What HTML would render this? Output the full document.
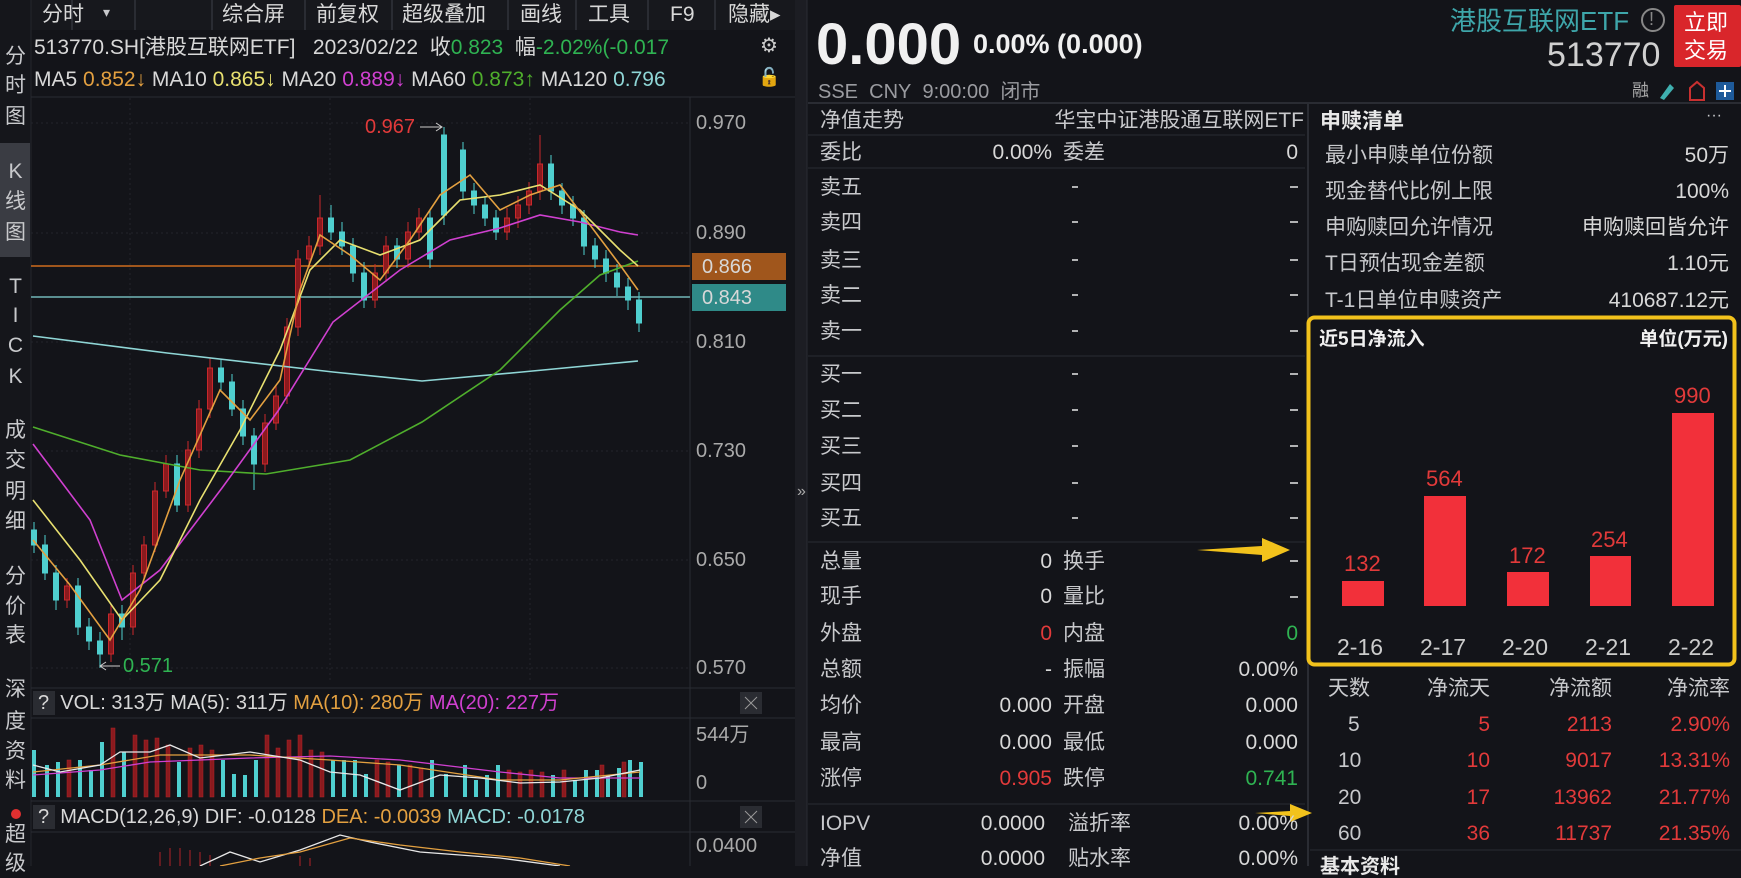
<!DOCTYPE html>
<html><head><meta charset="utf-8">
<style>
*{margin:0;padding:0;box-sizing:border-box}
body{width:1741px;height:866px;background:#131419;overflow:hidden;position:relative;font-family:"Liberation Sans","Noto Sans CJK SC",sans-serif;color:#c8c9cc}
.t{position:absolute;white-space:nowrap;line-height:1}
.r{text-align:right}
.g{color:#2fb352}.rd{color:#e23a3a}.w{color:#d8d8d8}
.s{font-size:21px}
.sb{position:absolute;left:0;width:31px;text-align:center;font-size:21px;color:#c8c9cc;line-height:1}
</style></head><body>
<svg width="1741" height="866" style="position:absolute;left:0;top:0">
<!-- toolbar -->
<rect x="0" y="0" width="800" height="30" fill="#17181d"/>
<g stroke="#2a2c33" stroke-width="2">
<line x1="72" y1="0" x2="72" y2="30"/><line x1="135" y1="0" x2="135" y2="30"/><line x1="212" y1="0" x2="212" y2="30"/>
<line x1="305" y1="0" x2="305" y2="30"/><line x1="392" y1="0" x2="392" y2="30"/><line x1="508" y1="0" x2="508" y2="30"/>
<line x1="576" y1="0" x2="576" y2="30"/><line x1="648" y1="0" x2="648" y2="30"/><line x1="715" y1="0" x2="715" y2="30"/>
</g>
<!-- sidebar -->
<rect x="0" y="0" width="31" height="866" fill="#15161b"/>
<rect x="0" y="143" width="30" height="114" fill="#3a3c43"/>
<line x1="31" y1="0" x2="31" y2="866" stroke="#24262c"/>
<circle cx="16" cy="814" r="5" fill="#e03030"/>
<!-- chart grid -->
<g stroke="#23252c" stroke-dasharray="2,3">
<line x1="31" y1="123" x2="690" y2="123"/><line x1="31" y1="233" x2="690" y2="233"/>
<line x1="31" y1="342" x2="690" y2="342"/><line x1="31" y1="451" x2="690" y2="451"/>
<line x1="31" y1="560" x2="690" y2="560"/><line x1="31" y1="668" x2="690" y2="668"/>
<line x1="130" y1="98" x2="130" y2="680"/><line x1="330" y1="98" x2="330" y2="680"/><line x1="530" y1="98" x2="530" y2="680"/>
</g>
<line x1="31" y1="97" x2="795" y2="97" stroke="#2a2c33"/>
<line x1="690" y1="97" x2="690" y2="866" stroke="#2a2c33"/>
<line x1="31" y1="266" x2="690" y2="266" stroke="#a0561c" stroke-width="2"/>
<line x1="31" y1="297" x2="690" y2="297" stroke="#5a8e90" stroke-width="2"/>
<rect x="692" y="253" width="94" height="27" fill="#a0561c"/>
<rect x="692" y="284" width="94" height="27" fill="#2f8a88"/>
<!-- candles -->
<g id="c">
<g stroke="#4fcfcf" fill="#4fcfcf">
<line x1="34" y1="522" x2="34" y2="553"/><rect x="31.5" y="530" width="5" height="15"/>
<line x1="45" y1="535" x2="45" y2="580"/><rect x="42.5" y="545" width="5" height="28"/>
<line x1="56" y1="565" x2="56" y2="610"/><rect x="53.5" y="573" width="5" height="27"/>
<line x1="78" y1="578" x2="78" y2="635"/><rect x="75.5" y="586" width="5" height="41"/>
<line x1="89" y1="618" x2="89" y2="650"/><rect x="86.5" y="627" width="5" height="14"/>
<line x1="100" y1="632" x2="100" y2="668"/><rect x="97.5" y="641" width="5" height="13"/>
<line x1="122" y1="605" x2="122" y2="640"/><rect x="119.5" y="614" width="5" height="13"/>
<line x1="177" y1="455" x2="177" y2="512"/><rect x="174.5" y="464" width="5" height="41"/>
<line x1="221" y1="360" x2="221" y2="390"/><rect x="218.5" y="368" width="5" height="14"/>
<line x1="232" y1="374" x2="232" y2="416"/><rect x="229.5" y="382" width="5" height="27"/>
<line x1="243" y1="400" x2="243" y2="445"/><rect x="240.5" y="409" width="5" height="27"/>
<line x1="254" y1="428" x2="254" y2="490"/><rect x="251.5" y="436" width="5" height="28"/>
<line x1="331" y1="205" x2="331" y2="240"/><rect x="328.5" y="218" width="5" height="14"/>
<line x1="342" y1="222" x2="342" y2="255"/><rect x="339.5" y="232" width="5" height="14"/>
<line x1="353" y1="238" x2="353" y2="282"/><rect x="350.5" y="246" width="5" height="27"/>
<line x1="364" y1="262" x2="364" y2="308"/><rect x="361.5" y="273" width="5" height="27"/>
<line x1="397" y1="238" x2="397" y2="268"/><rect x="394.5" y="246" width="5" height="13"/>
<line x1="430" y1="210" x2="430" y2="268"/><rect x="427.5" y="218" width="5" height="41"/>
<line x1="444" y1="127" x2="444" y2="225"/><rect x="441.5" y="135" width="5" height="80"/>
<line x1="463" y1="142" x2="463" y2="200"/><rect x="460.5" y="150" width="5" height="41"/>
<line x1="474" y1="183" x2="474" y2="214"/><rect x="471.5" y="191" width="5" height="14"/>
<line x1="485" y1="196" x2="485" y2="226"/><rect x="482.5" y="205" width="5" height="13"/>
<line x1="496" y1="210" x2="496" y2="240"/><rect x="493.5" y="218" width="5" height="14"/>
<line x1="551" y1="155" x2="551" y2="200"/><rect x="548.5" y="164" width="5" height="27"/>
<line x1="562" y1="183" x2="562" y2="214"/><rect x="559.5" y="191" width="5" height="14"/>
<line x1="573" y1="196" x2="573" y2="226"/><rect x="570.5" y="205" width="5" height="13"/>
<line x1="584" y1="210" x2="584" y2="255"/><rect x="581.5" y="218" width="5" height="28"/>
<line x1="595" y1="238" x2="595" y2="268"/><rect x="592.5" y="246" width="5" height="13"/>
<line x1="606" y1="250" x2="606" y2="282"/><rect x="603.5" y="259" width="5" height="14"/>
<line x1="617" y1="264" x2="617" y2="296"/><rect x="614.5" y="273" width="5" height="14"/>
<line x1="628" y1="278" x2="628" y2="310"/><rect x="625.5" y="287" width="5" height="13"/>
<line x1="639" y1="292" x2="639" y2="332"/><rect x="636.5" y="300" width="5" height="23"/>
</g>
<g stroke="#c8282c" fill="#8a1a1e">
<line x1="67" y1="578" x2="67" y2="608"/><rect x="64.5" y="586" width="5" height="14"/>
<line x1="111" y1="605" x2="111" y2="662"/><rect x="108.5" y="614" width="5" height="40"/>
<line x1="133" y1="565" x2="133" y2="635"/><rect x="130.5" y="573" width="5" height="54"/>
<line x1="144" y1="536" x2="144" y2="582"/><rect x="141.5" y="545" width="5" height="28"/>
<line x1="155" y1="482" x2="155" y2="552"/><rect x="152.5" y="491" width="5" height="54"/>
<line x1="166" y1="455" x2="166" y2="498"/><rect x="163.5" y="464" width="5" height="27"/>
<line x1="188" y1="441" x2="188" y2="512"/><rect x="185.5" y="450" width="5" height="55"/>
<line x1="199" y1="400" x2="199" y2="458"/><rect x="196.5" y="409" width="5" height="41"/>
<line x1="210" y1="358" x2="210" y2="418"/><rect x="207.5" y="368" width="5" height="41"/>
<line x1="265" y1="414" x2="265" y2="472"/><rect x="262.5" y="423" width="5" height="41"/>
<line x1="276" y1="386" x2="276" y2="430"/><rect x="273.5" y="396" width="5" height="27"/>
<line x1="287" y1="318" x2="287" y2="404"/><rect x="284.5" y="327" width="5" height="69"/>
<line x1="298" y1="250" x2="298" y2="336"/><rect x="295.5" y="259" width="5" height="68"/>
<line x1="309" y1="236" x2="309" y2="268"/><rect x="306.5" y="246" width="5" height="13"/>
<line x1="320" y1="195" x2="320" y2="255"/><rect x="317.5" y="218" width="5" height="28"/>
<line x1="375" y1="264" x2="375" y2="308"/><rect x="372.5" y="273" width="5" height="27"/>
<line x1="386" y1="236" x2="386" y2="282"/><rect x="383.5" y="246" width="5" height="27"/>
<line x1="408" y1="222" x2="408" y2="268"/><rect x="405.5" y="232" width="5" height="27"/>
<line x1="419" y1="208" x2="419" y2="240"/><rect x="416.5" y="218" width="5" height="14"/>
<line x1="507" y1="208" x2="507" y2="240"/><rect x="504.5" y="218" width="5" height="14"/>
<line x1="518" y1="196" x2="518" y2="228"/><rect x="515.5" y="205" width="5" height="13"/>
<line x1="529" y1="182" x2="529" y2="214"/><rect x="526.5" y="191" width="5" height="14"/>
<line x1="540" y1="135" x2="540" y2="200"/><rect x="537.5" y="164" width="5" height="27"/>
</g>
</g>
<!-- MAs -->
<g fill="none" stroke-width="1.6">
<polyline stroke="#8fd6d6" points="33,336 167,353 333,372 422,381 522,372 638,361"/>
<polyline stroke="#4fae2c" points="33,427 120,455 200,470 266,474 350,460 422,422 500,370 560,310 600,275 638,261"/>
<polyline stroke="#d040d0" points="33,444 90,520 122,600 160,570 222,488 278,411 333,322 400,270 450,240 500,228 540,215 580,222 620,232 638,235"/>
<polyline stroke="#e8e070" points="33,500 80,560 122,620 160,580 200,500 240,430 280,350 310,270 340,240 380,255 420,240 460,200 500,195 540,185 580,210 620,250 638,266"/>
<polyline stroke="#e3a040" points="33,540 70,585 110,640 140,590 180,480 220,390 250,420 280,380 300,290 320,235 350,255 380,280 410,240 440,195 470,175 500,210 530,195 560,185 590,225 620,265 638,290"/>
</g>
<path d="M420 127 H442 M436 123 L442 127 L436 131" stroke="#ccc" fill="none"/>
<path d="M100 666 H120 M106 662 L100 666 L106 670" stroke="#ccc" fill="none"/>
<!-- vol panel -->
<line x1="31" y1="688" x2="795" y2="688" stroke="#2a2c33"/>
<rect x="33" y="691" width="22" height="24" fill="#2a2c32"/>
<rect x="740" y="692" width="22" height="22" fill="#2a2c32"/>
<path d="M745 697 L757 709 M757 697 L745 709" stroke="#999"/>
<line x1="31" y1="718" x2="795" y2="718" stroke="#2a2c33"/>
<g id="vol">
<g fill="#4fcfcf">
<rect x="32" y="750" width="4" height="47"/><rect x="45" y="765" width="4" height="32"/><rect x="56" y="762" width="4" height="35"/><rect x="78" y="760" width="4" height="37"/><rect x="89" y="770" width="4" height="27"/><rect x="100" y="742" width="4" height="55"/><rect x="122" y="752" width="4" height="45"/><rect x="177" y="762" width="4" height="35"/><rect x="221" y="760" width="4" height="37"/><rect x="232" y="774" width="4" height="23"/><rect x="243" y="775" width="4" height="22"/><rect x="254" y="760" width="4" height="37"/><rect x="331" y="760" width="4" height="37"/><rect x="342" y="760" width="4" height="37"/><rect x="353" y="760" width="4" height="37"/><rect x="364" y="774" width="4" height="23"/><rect x="397" y="765" width="4" height="32"/><rect x="430" y="760" width="4" height="37"/><rect x="444" y="774" width="4" height="23"/><rect x="463" y="765" width="4" height="32"/><rect x="474" y="780" width="4" height="17"/><rect x="485" y="775" width="4" height="22"/><rect x="496" y="765" width="4" height="32"/><rect x="551" y="775" width="4" height="22"/><rect x="573" y="780" width="4" height="17"/><rect x="584" y="770" width="4" height="27"/><rect x="595" y="770" width="4" height="27"/><rect x="606" y="775" width="4" height="22"/><rect x="617" y="768" width="4" height="29"/><rect x="628" y="760" width="4" height="37"/><rect x="639" y="762" width="4" height="35"/>
</g>
<g fill="#8a1a1e" stroke="#b02226" stroke-width="0.5">
<rect x="67" y="760" width="4" height="37"/><rect x="111" y="728" width="4" height="69"/><rect x="133" y="735" width="4" height="62"/><rect x="144" y="740" width="4" height="57"/><rect x="155" y="738" width="4" height="59"/><rect x="166" y="745" width="4" height="52"/><rect x="188" y="748" width="4" height="49"/><rect x="199" y="745" width="4" height="52"/><rect x="210" y="750" width="4" height="47"/><rect x="265" y="735" width="4" height="62"/><rect x="276" y="748" width="4" height="49"/><rect x="287" y="740" width="4" height="57"/><rect x="298" y="735" width="4" height="62"/><rect x="309" y="750" width="4" height="47"/><rect x="320" y="752" width="4" height="45"/><rect x="375" y="760" width="4" height="37"/><rect x="386" y="762" width="4" height="35"/><rect x="408" y="765" width="4" height="32"/><rect x="419" y="768" width="4" height="29"/><rect x="507" y="770" width="4" height="27"/><rect x="518" y="772" width="4" height="25"/><rect x="529" y="770" width="4" height="27"/><rect x="540" y="772" width="4" height="25"/><rect x="562" y="770" width="4" height="27"/><rect x="600" y="765" width="4" height="32"/><rect x="622" y="762" width="4" height="35"/>
</g>
<g fill="none" stroke-width="1.3">
<polyline stroke="#d040d0" points="33,775 100,770 150,762 250,758 330,756 400,760 500,772 560,778 640,778"/>
<polyline stroke="#e3a040" points="33,772 100,765 160,755 250,755 330,760 400,765 500,780 560,780 640,772"/>
<polyline stroke="#e8e8e8" points="33,765 60,772 100,765 120,752 150,752 170,745 200,758 250,752 300,760 330,772 360,775 400,790 440,775 480,778 520,783 560,782 600,778 640,770"/>
</g>
</g>
<!-- macd panel -->
<line x1="31" y1="801" x2="795" y2="801" stroke="#2a2c33"/>
<rect x="33" y="805" width="22" height="24" fill="#2a2c32"/>
<rect x="740" y="806" width="22" height="22" fill="#2a2c32"/>
<path d="M745 811 L757 823 M757 811 L745 823" stroke="#999"/>
<line x1="31" y1="832" x2="795" y2="832" stroke="#2a2c33"/>
<g stroke="#b02226">
<line x1="160" y1="866" x2="160" y2="852"/><line x1="170" y1="866" x2="170" y2="848"/><line x1="180" y1="866" x2="180" y2="848"/><line x1="190" y1="866" x2="190" y2="850"/><line x1="200" y1="866" x2="200" y2="852"/><line x1="210" y1="866" x2="210" y2="855"/><line x1="300" y1="866" x2="300" y2="856"/><line x1="310" y1="866" x2="310" y2="858"/>
</g>
<polyline fill="none" stroke="#e8e8e8" stroke-width="1.3" points="200,866 230,852 260,862 300,850 340,835 370,842 420,852 500,858 560,866"/>
<polyline fill="none" stroke="#e3a040" stroke-width="1.3" points="220,866 260,858 300,852 350,838 400,845 460,852 520,858 570,866"/>
<!-- divider -->
<rect x="795" y="0" width="12" height="866" fill="#1c1d23"/>
<line x1="807" y1="0" x2="807" y2="866" stroke="#2a2c33"/>
<!-- middle panel lines -->
<line x1="808" y1="103" x2="1741" y2="103" stroke="#2a2c33" stroke-width="2"/>
<line x1="808" y1="135" x2="1305" y2="135" stroke="#2a2c33"/>
<line x1="808" y1="168" x2="1305" y2="168" stroke="#2a2c33"/>
<line x1="808" y1="356" x2="1305" y2="356" stroke="#2a2c33"/>
<line x1="808" y1="542" x2="1305" y2="542" stroke="#2a2c33"/>
<line x1="808" y1="804" x2="1305" y2="804" stroke="#2a2c33"/>
<line x1="1308" y1="103" x2="1308" y2="866" stroke="#2a2c33" stroke-width="2"/>
<line x1="1310" y1="850" x2="1741" y2="850" stroke="#2a2c33"/>
<!-- red button -->
<rect x="1674" y="5" width="67" height="62" fill="#d9262b" rx="2"/>
<circle cx="1653" cy="20" r="11" fill="none" stroke="#888" stroke-width="2"/>
<!-- icons -->
<path d="M1660 98 L1670 84 L1674 88 L1664 100 Z" fill="#3fb0b0"/>
<path d="M1690 100 V88 L1697 82 L1704 88 V100 Z" fill="none" stroke="#c83030" stroke-width="2"/>
<rect x="1716" y="82" width="18" height="18" fill="#1e5a9a"/><path d="M1725 85 V97 M1719 91 H1731" stroke="#fff" stroke-width="2"/>
<!-- yellow box & chart -->
<rect x="1308.5" y="317.5" width="426" height="347" rx="6" fill="none" stroke="#f2c21c" stroke-width="4"/>
<g fill="#f2303a">
<rect x="1342" y="581" width="42" height="25"/>
<rect x="1424" y="496" width="42" height="110"/>
<rect x="1507" y="572" width="42" height="34"/>
<rect x="1590" y="556" width="41" height="50"/>
<rect x="1672" y="413" width="42" height="193"/>
</g>
<g stroke="#e8e8e8" stroke-width="1.5">
<line x1="1290" y1="331" x2="1298" y2="331"/><line x1="1290" y1="374" x2="1298" y2="374"/><line x1="1290" y1="410" x2="1298" y2="410"/><line x1="1290" y1="446" x2="1298" y2="446"/><line x1="1290" y1="483" x2="1298" y2="483"/><line x1="1290" y1="518" x2="1298" y2="518"/><line x1="1290" y1="561" x2="1298" y2="561"/><line x1="1290" y1="597" x2="1298" y2="597"/>
<line x1="1290" y1="187" x2="1298" y2="187"/><line x1="1290" y1="222" x2="1298" y2="222"/><line x1="1290" y1="260" x2="1298" y2="260"/><line x1="1290" y1="295" x2="1298" y2="295"/>
<line x1="1072" y1="187" x2="1078" y2="187"/><line x1="1072" y1="222" x2="1078" y2="222"/><line x1="1072" y1="260" x2="1078" y2="260"/><line x1="1072" y1="295" x2="1078" y2="295"/><line x1="1072" y1="331" x2="1078" y2="331"/>
<line x1="1072" y1="374" x2="1078" y2="374"/><line x1="1072" y1="410" x2="1078" y2="410"/><line x1="1072" y1="446" x2="1078" y2="446"/><line x1="1072" y1="483" x2="1078" y2="483"/><line x1="1072" y1="518" x2="1078" y2="518"/>
</g>
<!-- yellow arrows -->
<path d="M1197 550 L1262 546 L1262 538 L1290 550 L1262 562 L1262 555 Z" fill="#f2c21c"/>
<path d="M1255 813 L1290 811 L1290 804 L1312 813 L1290 822 L1290 816 Z" fill="#f2c21c"/>
</svg>

<!-- sidebar text -->
<div class="sb" style="top:46px">分</div><div class="sb" style="top:75px">时</div><div class="sb" style="top:106px">图</div>
<div class="sb" style="top:161px">K</div><div class="sb" style="top:191px">线</div><div class="sb" style="top:222px">图</div>
<div class="sb" style="top:276px">T</div><div class="sb" style="top:305px">I</div><div class="sb" style="top:335px">C</div><div class="sb" style="top:366px">K</div>
<div class="sb" style="top:420px">成</div><div class="sb" style="top:450px">交</div><div class="sb" style="top:481px">明</div><div class="sb" style="top:511px">细</div>
<div class="sb" style="top:566px">分</div><div class="sb" style="top:596px">价</div><div class="sb" style="top:625px">表</div>
<div class="sb" style="top:679px">深</div><div class="sb" style="top:711px">度</div><div class="sb" style="top:741px">资</div><div class="sb" style="top:770px">料</div>
<div class="sb" style="top:824px">超</div><div class="sb" style="top:853px">级</div>

<!-- toolbar text -->
<div class="t w" style="left:42px;top:4px;font-size:21px">分时</div>
<div class="t" style="left:103px;top:5px;font-size:14px">▾</div>
<div class="t w" style="left:222px;top:4px;font-size:21px">综合屏</div>
<div class="t w" style="left:316px;top:4px;font-size:21px">前复权</div>
<div class="t w" style="left:402px;top:4px;font-size:21px">超级叠加</div>
<div class="t w" style="left:520px;top:4px;font-size:21px">画线</div>
<div class="t w" style="left:588px;top:4px;font-size:21px">工具</div>
<div class="t w" style="left:670px;top:4px;font-size:21px">F9</div>
<div class="t w" style="left:728px;top:4px;font-size:21px">隐藏▸</div>

<div class="t w" style="left:34px;top:37px;font-size:21px">513770.SH[港股互联网ETF]&nbsp;&nbsp;&nbsp;2023/02/22&nbsp;&nbsp;收<span class="g">0.823</span>&nbsp;&nbsp;幅<span class="g">-2.02%(-0.017</span></div>
<div class="t w" style="left:34px;top:69px;font-size:21px">MA5 <span style="color:#e3a040">0.852↓</span> MA10 <span style="color:#e8e070">0.865↓</span> MA20 <span style="color:#d040d0">0.889↓</span> MA60 <span style="color:#4fae2c">0.873↑</span> MA120 <span style="color:#8fd6d6">0.796</span></div>
<div class="t" style="left:760px;top:36px;font-size:20px;color:#ccc">⚙</div>
<div class="t" style="left:758px;top:68px;font-size:18px;color:#e0b020">🔓</div>

<!-- price axis -->
<div class="t" style="left:696px;top:113px;font-size:20px;color:#aaa">0.970</div>
<div class="t" style="left:696px;top:223px;font-size:20px;color:#aaa">0.890</div>
<div class="t" style="left:696px;top:332px;font-size:20px;color:#aaa">0.810</div>
<div class="t" style="left:696px;top:441px;font-size:20px;color:#aaa">0.730</div>
<div class="t" style="left:696px;top:550px;font-size:20px;color:#aaa">0.650</div>
<div class="t" style="left:696px;top:658px;font-size:20px;color:#aaa">0.570</div>
<div class="t w" style="left:702px;top:257px;font-size:20px">0.866</div>
<div class="t w" style="left:702px;top:288px;font-size:20px">0.843</div>
<div class="t rd" style="left:365px;top:117px;font-size:20px">0.967</div>
<div class="t g" style="left:123px;top:656px;font-size:20px">0.571</div>

<div class="t w" style="left:38px;top:693px;font-size:20px">?&nbsp; VOL: 313万 MA(5): 311万 <span style="color:#e3a040">MA(10): 280万</span> <span style="color:#d040d0">MA(20): 227万</span></div>
<div class="t" style="left:696px;top:725px;font-size:20px;color:#aaa">544万</div>
<div class="t" style="left:696px;top:773px;font-size:20px;color:#aaa">0</div>
<div class="t w" style="left:38px;top:807px;font-size:20px">?&nbsp; MACD(12,26,9) DIF: -0.0128 <span style="color:#e3a040">DEA: -0.0039</span> <span style="color:#8fd6d6">MACD: -0.0178</span></div>
<div class="t" style="left:696px;top:836px;font-size:20px;color:#aaa">0.0400</div>
<div class="t" style="left:797px;top:484px;font-size:16px;color:#aaa">»</div>

<!-- middle header -->
<div class="t" style="left:816px;top:16px;font-size:58px;font-weight:bold;color:#f0f0f0">0.000</div>
<div class="t" style="left:973px;top:31px;font-size:27px;font-weight:bold;color:#f0f0f0">0.00% (0.000)</div>
<div class="t" style="left:818px;top:82px;font-size:20px;color:#9a9ba0">SSE&nbsp; CNY&nbsp; 9:00:00&nbsp; 闭市</div>
<div class="t" style="left:1450px;top:8px;font-size:26px;color:#3ea6aa">港股互联网ETF</div>
<div class="t" style="left:1649px;top:10px;font-size:18px;color:#888">!</div>
<div class="t" style="left:1547px;top:38px;font-size:34px;color:#d0d0d0">513770</div>
<div class="t" style="left:1684px;top:12px;font-size:22px;color:#fff">立即</div>
<div class="t" style="left:1684px;top:40px;font-size:22px;color:#fff">交易</div>
<div class="t" style="left:1632px;top:82px;font-size:17px;color:#aaa">融</div>

<!-- middle rows -->
<div class="t s" style="left:820px;top:110px">净值走势</div>
<div class="t s r" style="right:437px;top:110px">华宝中证港股通互联网ETF</div>
<div class="t s" style="left:820px;top:142px">委比</div><div class="t s r w" style="right:689px;top:142px">0.00%</div><div class="t s" style="left:1063px;top:142px">委差</div><div class="t s r w" style="right:443px;top:142px">0</div>
<div class="t s" style="left:820px;top:177px">卖五</div><div class="t s" style="left:820px;top:212px">卖四</div><div class="t s" style="left:820px;top:250px">卖三</div><div class="t s" style="left:820px;top:285px">卖二</div><div class="t s" style="left:820px;top:321px">卖一</div>
<div class="t s" style="left:820px;top:364px">买一</div><div class="t s" style="left:820px;top:400px">买二</div><div class="t s" style="left:820px;top:436px">买三</div><div class="t s" style="left:820px;top:473px">买四</div><div class="t s" style="left:820px;top:508px">买五</div>
<div class="t s" style="left:820px;top:551px">总量</div><div class="t s r w" style="right:689px;top:551px">0</div><div class="t s" style="left:1063px;top:551px">换手</div>
<div class="t s" style="left:820px;top:586px">现手</div><div class="t s r w" style="right:689px;top:586px">0</div><div class="t s" style="left:1063px;top:586px">量比</div>
<div class="t s" style="left:820px;top:623px">外盘</div><div class="t s r rd" style="right:689px;top:623px">0</div><div class="t s" style="left:1063px;top:623px">内盘</div><div class="t s r g" style="right:443px;top:623px">0</div>
<div class="t s" style="left:820px;top:659px">总额</div><div class="t s r w" style="right:689px;top:659px">-</div><div class="t s" style="left:1063px;top:659px">振幅</div><div class="t s r w" style="right:443px;top:659px">0.00%</div>
<div class="t s" style="left:820px;top:695px">均价</div><div class="t s r w" style="right:689px;top:695px">0.000</div><div class="t s" style="left:1063px;top:695px">开盘</div><div class="t s r w" style="right:443px;top:695px">0.000</div>
<div class="t s" style="left:820px;top:732px">最高</div><div class="t s r w" style="right:689px;top:732px">0.000</div><div class="t s" style="left:1063px;top:732px">最低</div><div class="t s r w" style="right:443px;top:732px">0.000</div>
<div class="t s" style="left:820px;top:768px">涨停</div><div class="t s r rd" style="right:689px;top:768px">0.905</div><div class="t s" style="left:1063px;top:768px">跌停</div><div class="t s r g" style="right:443px;top:768px">0.741</div>
<div class="t s" style="left:820px;top:813px">IOPV</div><div class="t s r w" style="right:696px;top:813px">0.0000</div><div class="t s" style="left:1068px;top:813px">溢折率</div><div class="t s r w" style="right:443px;top:813px">0.00%</div>
<div class="t s" style="left:820px;top:848px">净值</div><div class="t s r w" style="right:696px;top:848px">0.0000</div><div class="t s" style="left:1068px;top:848px">贴水率</div><div class="t s r w" style="right:443px;top:848px">0.00%</div>

<!-- right panel -->
<div class="t s" style="left:1320px;top:111px;font-weight:bold;color:#e8e8e8">申赎清单</div>
<div class="t" style="left:1706px;top:108px;font-size:16px">···</div>
<div class="t s" style="left:1325px;top:145px">最小申赎单位份额</div><div class="t s r w" style="right:12px;top:145px">50万</div>
<div class="t s" style="left:1325px;top:181px">现金替代比例上限</div><div class="t s r w" style="right:12px;top:181px">100%</div>
<div class="t s" style="left:1325px;top:217px">申购赎回允许情况</div><div class="t s r w" style="right:12px;top:217px">申购赎回皆允许</div>
<div class="t s" style="left:1325px;top:253px">T日预估现金差额</div><div class="t s r w" style="right:12px;top:253px">1.10元</div>
<div class="t s" style="left:1325px;top:290px">T-1日单位申赎资产</div><div class="t s r w" style="right:12px;top:290px">410687.12元</div>

<div class="t" style="left:1319px;top:330px;font-size:19px;font-weight:bold;color:#f0f0f0">近5日净流入</div>
<div class="t r" style="right:13px;top:330px;font-size:19px;font-weight:bold;color:#f0f0f0">单位(万元)</div>
<div class="t rd" style="left:1344px;top:553px;font-size:22px">132</div>
<div class="t rd" style="left:1426px;top:468px;font-size:22px">564</div>
<div class="t rd" style="left:1509px;top:545px;font-size:22px">172</div>
<div class="t rd" style="left:1591px;top:529px;font-size:22px">254</div>
<div class="t rd" style="left:1674px;top:385px;font-size:22px">990</div>
<div class="t" style="left:1337px;top:636px;font-size:23px;color:#ccc">2-16</div>
<div class="t" style="left:1420px;top:636px;font-size:23px;color:#ccc">2-17</div>
<div class="t" style="left:1502px;top:636px;font-size:23px;color:#ccc">2-20</div>
<div class="t" style="left:1585px;top:636px;font-size:23px;color:#ccc">2-21</div>
<div class="t" style="left:1668px;top:636px;font-size:23px;color:#ccc">2-22</div>

<div class="t s" style="left:1328px;top:678px">天数</div><div class="t s r" style="right:251px;top:678px">净流天</div><div class="t s r" style="right:129px;top:678px">净流额</div><div class="t s r" style="right:11px;top:678px">净流率</div>
<div class="t s" style="left:1348px;top:714px">5</div><div class="t s r rd" style="right:251px;top:714px">5</div><div class="t s r rd" style="right:129px;top:714px">2113</div><div class="t s r rd" style="right:11px;top:714px">2.90%</div>
<div class="t s" style="left:1338px;top:750px">10</div><div class="t s r rd" style="right:251px;top:750px">10</div><div class="t s r rd" style="right:129px;top:750px">9017</div><div class="t s r rd" style="right:11px;top:750px">13.31%</div>
<div class="t s" style="left:1338px;top:787px">20</div><div class="t s r rd" style="right:251px;top:787px">17</div><div class="t s r rd" style="right:129px;top:787px">13962</div><div class="t s r rd" style="right:11px;top:787px">21.77%</div>
<div class="t s" style="left:1338px;top:823px">60</div><div class="t s r rd" style="right:251px;top:823px">36</div><div class="t s r rd" style="right:129px;top:823px">11737</div><div class="t s r rd" style="right:11px;top:823px">21.35%</div>
<div class="t" style="left:1320px;top:857px;font-size:20px;font-weight:bold;color:#e8e8e8">基本资料</div>
</body></html>
